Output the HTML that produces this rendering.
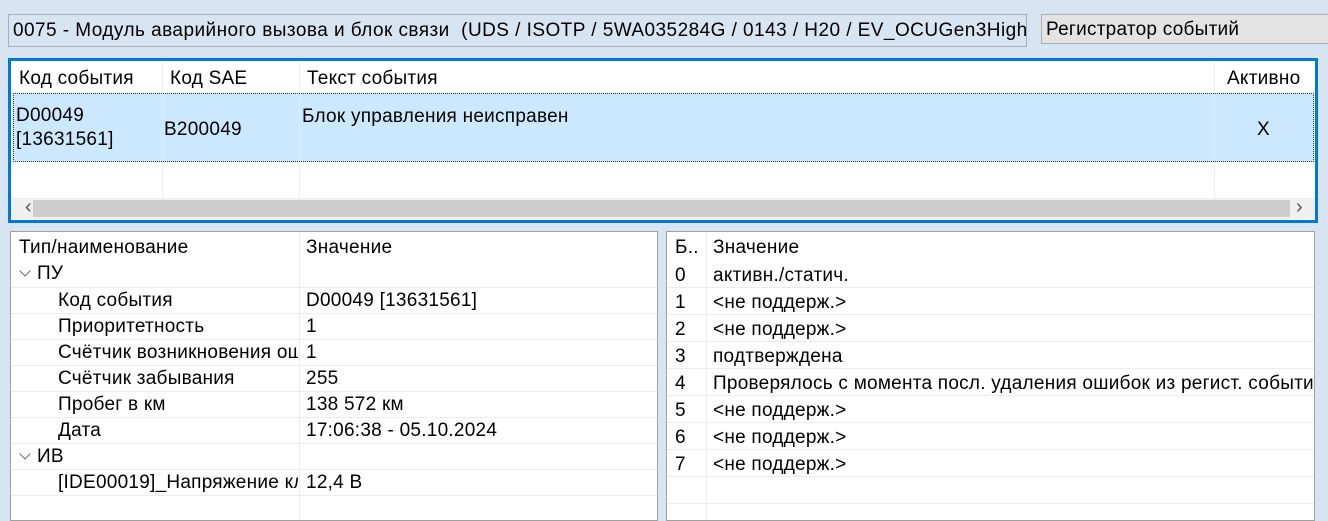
<!DOCTYPE html>
<html><head><meta charset="utf-8"><style>
*{margin:0;padding:0;box-sizing:border-box}
body{width:1328px;height:517px;background:#d7e4f2;font-family:"Liberation Sans",Arial,sans-serif;font-size:19px;letter-spacing:0.25px;color:#000;position:relative;overflow:hidden}
.a{position:absolute;white-space:nowrap}
.hl{position:absolute;height:1px;background:#ececec}
.vl{position:absolute;width:1px;background:#ececec}
.ch{display:inline-block;width:8px;height:8px;border-right:1.5px solid #666;border-bottom:1.5px solid #666;transform:rotate(45deg);margin:0 8px 4px 2px}
</style></head><body>
<div class="a" style="left:8px;top:14px;width:1019px;height:33px;border:1px solid #a8aeb6;background:#d7e4f2;overflow:hidden;padding:5px 0 0 4px;letter-spacing:0.45px">0075 - Модуль аварийного вызова и блок связи &nbsp;(UDS / ISOTP / 5WA035284G / 0143 / H20 / EV_OCUGen3High</div>
<div class="a" style="left:1041px;top:14px;width:300px;height:30px;border:1px solid #a8aeb6;background:#e3e3e3;padding:4px 0 0 4px">Регистратор событий</div>

<div class="a" style="left:8px;top:58px;width:1310px;height:165px;border:3px solid #0078d7;background:#fff;overflow:hidden">
  <div class="a" style="left:8px;top:7px">Код события</div>
  <div class="a" style="left:159px;top:7px">Код SAE</div>
  <div class="a" style="left:296px;top:7px">Текст события</div>
  <div class="a" style="left:1216px;top:7px">Активно</div>
  <div class="vl" style="left:151px;top:2px;height:135px"></div>
  <div class="vl" style="left:288px;top:2px;height:135px"></div>
  <div class="vl" style="left:1203px;top:2px;height:135px"></div>
  <div class="a" style="left:2px;top:32px;width:1301px;height:69px;background:#cce8ff;border:1px dotted #333"></div>
  <div class="vl" style="left:151px;top:33px;height:67px;background:#dde9f3"></div>
  <div class="vl" style="left:288px;top:33px;height:67px;background:#dde9f3"></div>
  <div class="vl" style="left:1203px;top:33px;height:67px;background:#dde9f3"></div>
  <div class="a" style="left:5px;top:43px;line-height:24px">D00049<br>[13631561]</div>
  <div class="a" style="left:153px;top:58px">B200049</div>
  <div class="a" style="left:291px;top:45px">Блок управления неисправен</div>
  <div class="a" style="left:1246px;top:58px">X</div>
  <div class="a" style="left:0;top:137px;width:1304px;height:21px;background:#f0f0f0"></div>
  <div class="a" style="left:22px;top:139px;width:1257px;height:17px;background:#cdcdcd"></div>
  <div class="a" style="left:14px;top:135px;font-size:20px;color:#555">‹</div>
  <div class="a" style="left:1285px;top:135px;font-size:20px;color:#555">›</div>
</div>

<div class="a" style="left:10px;top:231px;width:648px;height:290px;border:1px solid #a0a0a0;background:#fff;overflow:hidden">
  <div class="vl" style="left:288px;top:0;height:290px"></div>
  <div class="hl" style="left:0;top:55px;width:648px"></div>
  <div class="hl" style="left:0;top:81px;width:648px"></div>
  <div class="hl" style="left:0;top:107px;width:648px"></div>
  <div class="hl" style="left:0;top:133px;width:648px"></div>
  <div class="hl" style="left:0;top:159px;width:648px"></div>
  <div class="hl" style="left:0;top:185px;width:648px"></div>
  <div class="hl" style="left:0;top:211px;width:648px"></div>
  <div class="hl" style="left:0;top:237px;width:648px"></div>
  <div class="hl" style="left:0;top:263px;width:648px"></div>
  <div class="a" style="left:8px;top:5px">Тип/наименование</div>
  <div class="a" style="left:295px;top:5px">Значение</div>
  <div class="a" style="left:8px;top:31px"><span class="ch"></span>ПУ</div>
  <div class="a" style="left:47px;top:58px;width:240px;overflow:hidden">Код события</div>
  <div class="a" style="left:47px;top:84px">Приоритетность</div>
  <div class="a" style="left:47px;top:110px;width:240px;overflow:hidden">Счётчик возникновения ошибки</div>
  <div class="a" style="left:47px;top:136px">Счётчик забывания</div>
  <div class="a" style="left:47px;top:162px">Пробег в км</div>
  <div class="a" style="left:47px;top:188px">Дата</div>
  <div class="a" style="left:8px;top:214px"><span class="ch"></span>ИВ</div>
  <div class="a" style="left:47px;top:240px;width:240px;overflow:hidden">[IDE00019]_Напряжение клеммы</div>
  <div class="a" style="left:295px;top:58px">D00049 [13631561]</div>
  <div class="a" style="left:295px;top:84px">1</div>
  <div class="a" style="left:295px;top:110px">1</div>
  <div class="a" style="left:295px;top:136px">255</div>
  <div class="a" style="left:295px;top:162px">138 572 км</div>
  <div class="a" style="left:295px;top:188px">17:06:38 - 05.10.2024</div>
  <div class="a" style="left:295px;top:240px">12,4 В</div>
</div>

<div class="a" style="left:666px;top:231px;width:649px;height:290px;border:1px solid #a0a0a0;background:#fff;overflow:hidden">
  <div class="vl" style="left:39px;top:0;height:290px"></div>
  <div class="hl" style="left:0;top:55px;width:649px"></div>
  <div class="hl" style="left:0;top:82px;width:649px"></div>
  <div class="hl" style="left:0;top:109px;width:649px"></div>
  <div class="hl" style="left:0;top:136px;width:649px"></div>
  <div class="hl" style="left:0;top:163px;width:649px"></div>
  <div class="hl" style="left:0;top:190px;width:649px"></div>
  <div class="hl" style="left:0;top:217px;width:649px"></div>
  <div class="hl" style="left:0;top:244px;width:649px"></div>
  <div class="hl" style="left:0;top:271px;width:649px"></div>
  <div class="a" style="left:8px;top:5px">Б..</div>
  <div class="a" style="left:46px;top:5px">Значение</div>
  <div class="a" style="left:8px;top:33px">0</div><div class="a" style="left:46px;top:33px">активн./статич.</div>
  <div class="a" style="left:8px;top:60px">1</div><div class="a" style="left:46px;top:60px">&lt;не поддерж.&gt;</div>
  <div class="a" style="left:8px;top:87px">2</div><div class="a" style="left:46px;top:87px">&lt;не поддерж.&gt;</div>
  <div class="a" style="left:8px;top:114px">3</div><div class="a" style="left:46px;top:114px">подтверждена</div>
  <div class="a" style="left:8px;top:141px">4</div><div class="a" style="left:46px;top:141px">Проверялось с момента посл. удаления ошибок из регист. событий</div>
  <div class="a" style="left:8px;top:168px">5</div><div class="a" style="left:46px;top:168px">&lt;не поддерж.&gt;</div>
  <div class="a" style="left:8px;top:195px">6</div><div class="a" style="left:46px;top:195px">&lt;не поддерж.&gt;</div>
  <div class="a" style="left:8px;top:222px">7</div><div class="a" style="left:46px;top:222px">&lt;не поддерж.&gt;</div>
</div>
</body></html>
